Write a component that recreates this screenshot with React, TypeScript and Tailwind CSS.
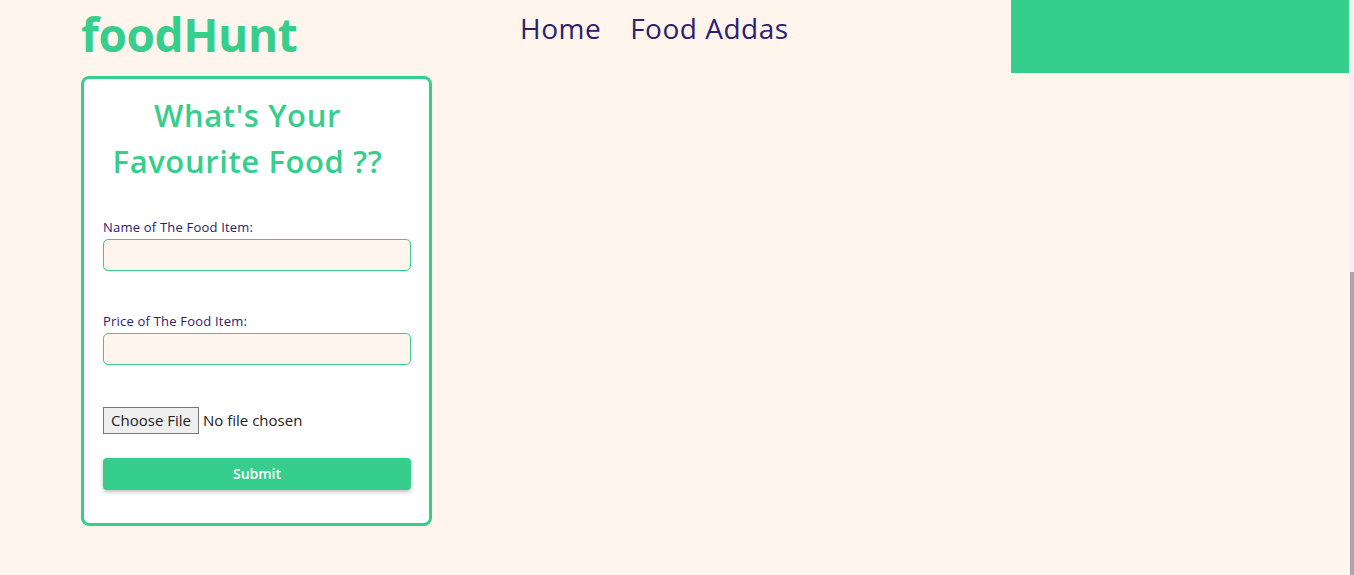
import React from 'react';

const font = { fontFamily: '"Open Sans", "Noto Sans", sans-serif' };

function Field({ label, className = '' }: { label: string; className?: string }) {
  return (
    <div className={className}>
      <label className="block text-[13px] leading-4 tracking-[0.2px] text-[#2b2170]">{label}</label>
      <input
        type="text"
        className="mt-[4px] block h-[32px] w-[308px] rounded-[5px] border border-[#36ce8c] bg-[#fff5ec] px-2 text-sm outline-none"
      />
    </div>
  );
}

export default function App() {
  return (
    <div className="relative h-screen overflow-hidden bg-[#fff5ec]" style={font}>
      <div className="mr-[5px]">
        <header className="flex h-[73px]">
          <div className="w-[520px] pl-[81px] pt-[6px]">
            <a className="text-[46px] font-bold leading-[56px] tracking-[-0.4px] text-[#36ce8c]">foodHunt</a>
          </div>
          <nav className="flex gap-[29px] pt-[8px] text-[28px] leading-[40px] tracking-[0.5px] text-[#2b2170]">
            <a>Home</a>
            <a>Food Addas</a>
          </nav>
          <div className="ml-auto h-full w-[338px] bg-[#36ce8c]" />
        </header>

        <form className="ml-[81px] mt-[3px] w-[351px] rounded-[8px] border-[3px] border-[#36ce8c] bg-white pb-[33px] pl-[19px] pt-[13px]">
          <h1 className="pr-[37px] text-center text-[31px] font-semibold leading-[46px] tracking-[0.6px] text-[#36ce8c]">
            What's Your
            <br />
            Favourite Food ??
          </h1>

          <Field label="Name of The Food Item:" className="mt-[35px]" />
          <Field label="Price of The Food Item:" className="mt-[42px]" />

          <div className="mt-[42px] flex h-[27px] items-center text-[15px] text-[#222]">
            <span className="flex h-[27px] w-[96px] items-center justify-center border border-[#767676] bg-[#efefef]">
              Choose File
            </span>
            <span className="ml-[4px]">No file chosen</span>
          </div>

          <button
            type="button"
            className="mt-[24px] block h-[32px] w-[308px] rounded-[4px] bg-[#36ce8c] pb-[2px] text-[14px] font-semibold text-white shadow-[0_2px_4px_rgba(0,0,0,0.25)]"
          >
            Submit
          </button>
        </form>
      </div>

      <div className="absolute right-0 top-0 h-full w-[5px] bg-[#f1f1f1]">
        <div className="absolute bottom-0 right-0 top-[272px] w-[4px] bg-[#a8a8a8]" />
      </div>
    </div>
  );
}
